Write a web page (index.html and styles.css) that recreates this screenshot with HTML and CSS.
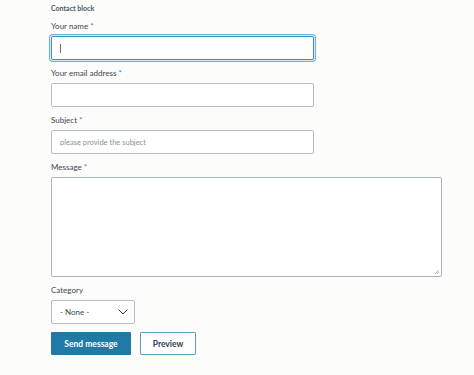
FILE: index.html
```html
<!DOCTYPE html>
<html lang="en">
<head>
  <meta charset="UTF-8">
  <title>Contact block</title>
  <link rel="stylesheet" href="styles.css">
</head>
<body>
  <form class="contact-form">
    <h2 class="block-title">Contact block</h2>

    <div class="form-item">
      <label class="form-label">Your name <span class="req">*</span></label>
      <div class="form-input focused"><span class="caret"></span></div>
    </div>

    <div class="form-item">
      <label class="form-label">Your email address <span class="req">*</span></label>
      <div class="form-input"></div>
    </div>

    <div class="form-item">
      <label class="form-label">Subject <span class="req">*</span></label>
      <div class="form-input"><span class="placeholder">please provide the subject</span></div>
    </div>

    <div class="form-item">
      <label class="form-label">Message <span class="req">*</span></label>
      <div class="form-textarea">
        <svg class="grip" width="6" height="6" viewBox="0 0 6 6"><path d="M5 1L1 5M5 3L3 5" stroke="#999" stroke-width="0.8"/></svg>
      </div>
    </div>

    <div class="form-item">
      <label class="form-label">Category</label>
      <div class="form-select">
        <span>- None -</span>
        <svg width="10" height="6" viewBox="0 0 10 6"><path d="M0.5 0.5l4.5 4.5L9.5 0.5" fill="none" stroke="#2f3b45" stroke-width="1"/></svg>
      </div>
    </div>

    <div class="actions">
      <button type="button" class="btn btn-primary">Send message</button>
      <button type="button" class="btn btn-secondary">Preview</button>
    </div>
  </form>
</body>
</html>
```

FILE: styles.css
```css
body {
  margin: 0;
  background: #fcfcfa;
  font-family: "Lato", "Inter", sans-serif;
  color: #3b4650;
}

.contact-form {
  padding: 4px 0 0 51px;
}

.block-title {
  margin: 0 0 8px;
  font-size: 7px;
  line-height: 9px;
  font-weight: 700;
  color: #4a5560;
}

.form-item {
  margin-bottom: 8px;
}

.form-label {
  display: block;
  font-size: 8px;
  line-height: 10px;
  margin-bottom: 5px;
  color: #3d4750;
}

.req {
  color: #2b8cb6;
}

.form-input {
  box-sizing: border-box;
  width: 263px;
  height: 24px;
  border: 1px solid #b4bfc4;
  border-radius: 2px;
  background: #fff;
  display: flex;
  align-items: center;
  padding-left: 8px;
}

.form-input.focused {
  border: 1px solid #3c91c0;
  box-shadow: 0 0 0 1px #d7ebf5, 0 0 0 2px #6cb2d6;
}

.caret {
  width: 1px;
  height: 9px;
  background: #6a6f73;
}

.placeholder {
  font-size: 7.5px;
  color: #8a9297;
}

.form-textarea {
  box-sizing: border-box;
  position: relative;
  width: 391px;
  height: 100px;
  border: 1px solid #a9b6b3;
  border-radius: 2px;
  background: #fff;
}

.grip {
  position: absolute;
  right: 1px;
  bottom: 1px;
}

.form-select {
  box-sizing: border-box;
  width: 84px;
  height: 24px;
  border: 1px solid #b4bfc4;
  border-radius: 2px;
  background: #fff;
  display: flex;
  align-items: center;
  justify-content: space-between;
  padding: 0 6px 0 8px;
  font-size: 8px;
  color: #3b4650;
}

.actions {
  display: flex;
  gap: 9px;
  margin-top: 5px;
}

.btn {
  height: 23px;
  font-family: inherit;
  font-size: 8.5px;
  font-weight: 700;
  border-radius: 1px;
  padding: 0;
  white-space: nowrap;
}

.btn-primary {
  background: #1f7aa5;
  border: 1px solid #1f7aa5;
  color: #fff;
  width: 80px;
}

.btn-secondary {
  background: #fff;
  border: 1px solid #5f9db7;
  color: #2f4452;
  width: 56px;
}
```
